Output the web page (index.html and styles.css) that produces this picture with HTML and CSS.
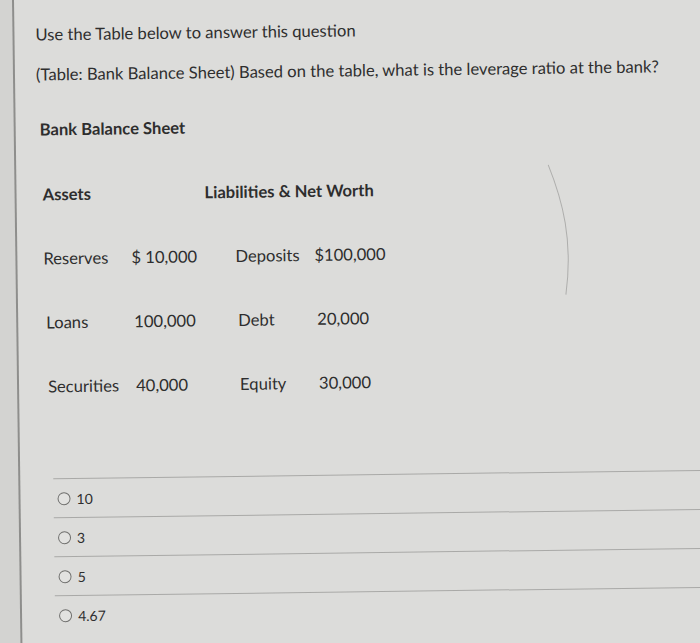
FILE: index.html
```html
<!DOCTYPE html>
<html>
<head>
<meta charset="utf-8">
<link rel="stylesheet" href="styles.css">
</head>
<body>
<div class="screen">
  <div class="panel">
    <p class="intro">Use the Table below to answer this question</p>
    <p class="question">(Table: Bank Balance Sheet) Based on the table, what is the leverage ratio at the bank?</p>
    <p class="title">Bank Balance Sheet</p>
    <div class="sheet">
      <div class="head c1">Assets</div>
      <div class="head c3">Liabilities &amp; Net Worth</div>

      <div class="c1 r1">Reserves</div>
      <div class="c2 r1">$ 10,000</div>
      <div class="c3 r1">Deposits</div>
      <div class="c4 r1">$100,000</div>

      <div class="c1 r2">Loans</div>
      <div class="c2 r2">100,000</div>
      <div class="c3 r2">Debt</div>
      <div class="c4 r2">20,000</div>

      <div class="c1 r3">Securities</div>
      <div class="c2 r3">40,000</div>
      <div class="c3 r3">Equity</div>
      <div class="c4 r3">30,000</div>
    </div>
    <ul class="options">
      <li><span class="radio"></span><span>10</span></li>
      <li><span class="radio"></span><span>3</span></li>
      <li><span class="radio"></span><span>5</span></li>
      <li><span class="radio"></span><span>4.67</span></li>
    </ul>
    <svg class="glare" width="40" height="140" viewBox="0 0 40 140"><path d="M6 4 C 20 40, 30 80, 22 134" fill="none" stroke="#9a9a98" stroke-width="1" opacity="0.7"/></svg>
  </div>
</div>
</body>
</html>
```

FILE: styles.css
```css
html, body {
  margin: 0;
  padding: 0;
  background: #d3d3d1;
  height: 100%;
  overflow: hidden;
}

.screen {
  padding-left: 12px;
  height: 643px;
  transform: rotate(-0.75deg);
  transform-origin: 0 0;
  width: 690px;
}

.panel {
  position: relative;
  height: 660px;
  border-left: 2px solid #8e8e8c;
  background: #dcdcda;
  font-family: Lato, "Noto Sans", sans-serif;
  color: #2e2e2e;
  padding-left: 21px;
  padding-top: 25px;
  box-sizing: border-box;
}

p {
  margin: 0;
}

.intro {
  font-size: 16.6px;
  line-height: 20px;
}

.question {
  font-size: 16.6px;
  line-height: 20px;
  margin-top: 20px;
}

.title {
  font-size: 16.6px;
  line-height: 20px;
  font-weight: bold;
  margin-top: 35px;
  margin-left: 3px;
}

.sheet {
  display: grid;
  grid-template-columns: 88px 104px 79px 100px;
  grid-template-rows: 20px 20px 20px 20px;
  row-gap: 44px;
  margin-top: 45px;
  margin-left: 5px;
  font-size: 16.6px;
  line-height: 20px;
}

.head {
  font-weight: bold;
}

.head.c3 {
  grid-column: 3 / 5;
  margin-left: -30px;
}

.c1 { grid-column: 1; }
.c2 { grid-column: 2; }
.c3 { grid-column: 3; }
.c4 { grid-column: 4; }
.r1 { grid-row: 2; }
.r2 { grid-row: 3; padding-left: 2px; }
.r3 { grid-row: 4; padding-left: 3px; }

.options {
  list-style: none;
  margin: 82px 0 0 12px;
  padding: 0;
  border-top: 1px solid #a9a9a7;
}

.options li {
  display: flex;
  align-items: center;
  gap: 6px;
  height: 38px;
  padding-left: 4px;
  border-bottom: 1px solid #a9a9a7;
  font-size: 14px;
}

.options li:last-child {
  border-bottom: none;
}

.radio {
  width: 11px;
  height: 11px;
  border: 1px solid #6f6f6d;
  border-radius: 50%;
  background: #e2e2e0;
  flex: none;
}

.glare {
  position: absolute;
  left: 526px;
  top: 168px;
}
```
